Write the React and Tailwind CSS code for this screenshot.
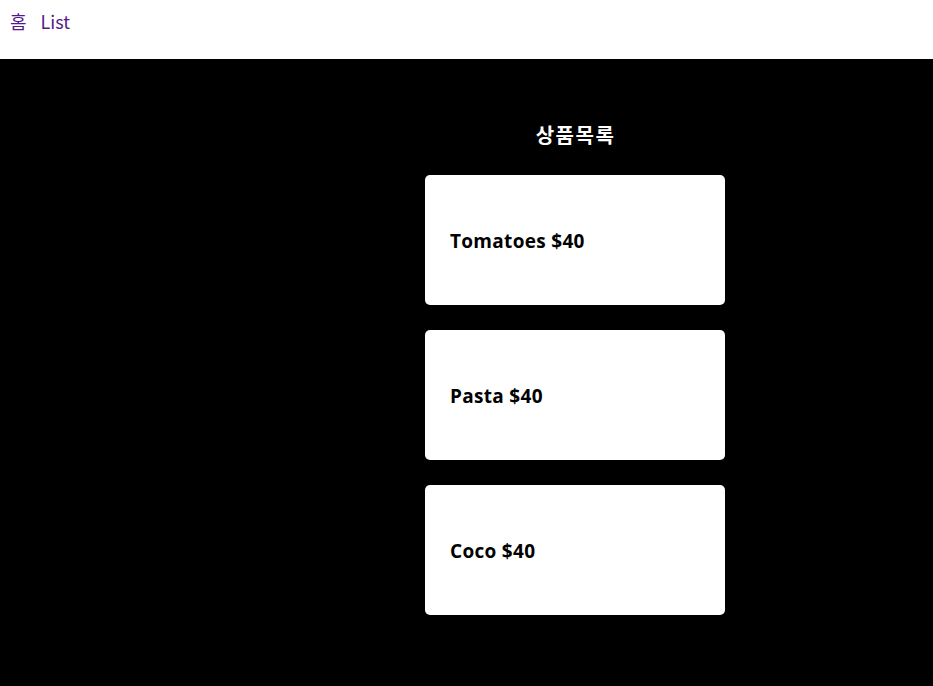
const products = [
  { id: 1, title: "Tomatoes", price: 40 },
  { id: 2, title: "Pasta", price: 40 },
  { id: 3, title: "Coco", price: 40 },
];

export default function App() {
  return (
    <div className="min-h-screen bg-black font-['Noto_Sans_CJK_KR',sans-serif]">
      <nav className="flex h-[59px] items-start gap-[14px] bg-white px-[10px] pt-[8px] text-[18px] text-[#551a8b]">
        <a href="#">홈</a>
        <a href="#">List</a>
      </nav>

      <div className="ml-[425px] flex w-[300px] flex-col pb-[71px]">
        <h4 className="mt-[62px] mb-[26px] pl-[1px] text-center text-[20px] leading-[28px] font-bold tracking-[1.5px] text-white">
          상품목록
        </h4>
        <div className="flex flex-col gap-[25px]">
          {products.map((item) => (
            <div
              key={item.id}
              className="flex h-[130px] items-center rounded-[5px] bg-white px-[25px] pt-[3px]"
            >
              <h4 className="font-['Open_Sans','Noto_Sans_CJK_KR',sans-serif] text-[19px] font-bold tracking-[0.3px] text-black">
                {item.title} ${item.price}
              </h4>
            </div>
          ))}
        </div>
      </div>
    </div>
  );
}
